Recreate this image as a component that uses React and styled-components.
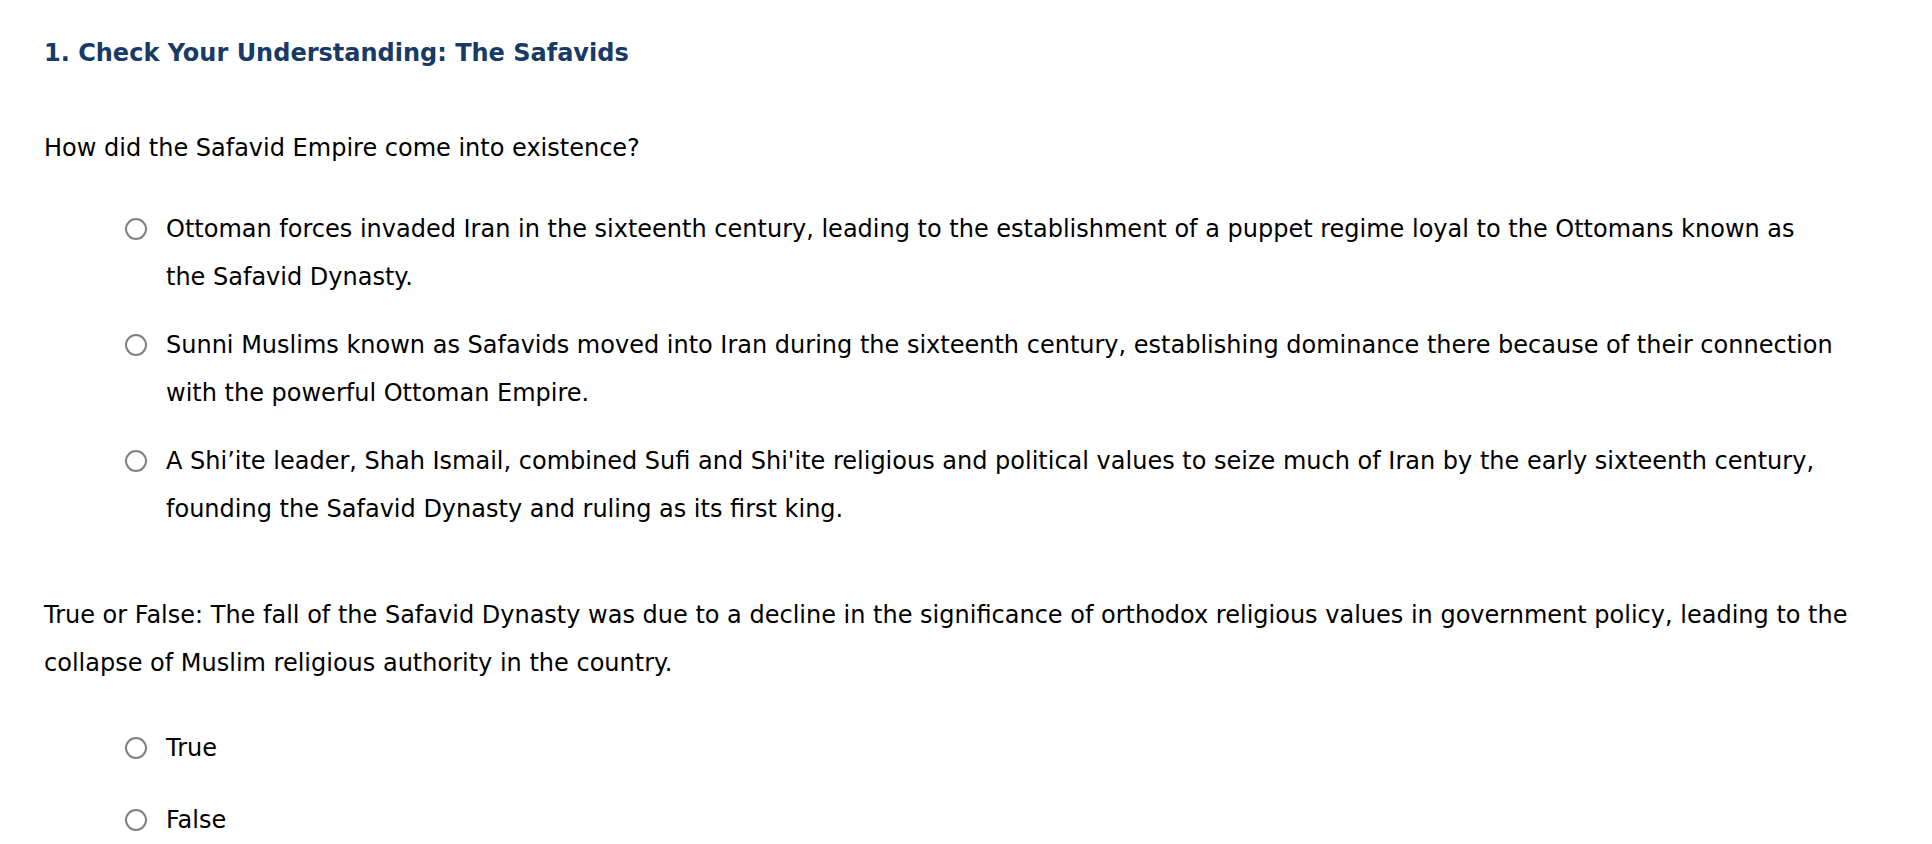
import styled, { createGlobalStyle } from 'styled-components';

const GlobalStyle = createGlobalStyle`
  body {
    margin: 0;
    background: #fff;
    font-family: Verdana, "DejaVu Sans", sans-serif;
    color: #000;
  }
`;

const Page = styled.div`
  padding: 36px 0 0 44px;
  width: 1826px;
`;

const Title = styled.h2`
  margin: 0;
  font-size: 24px;
  line-height: 34px;
  font-weight: bold;
  color: #173a66;
`;

const Question = styled.p`
  margin: ${(p) => p.top}px 0 0;
  font-size: 24px;
  line-height: 48px;
`;

const Options = styled.div`
  display: flex;
  flex-direction: column;
  gap: ${(p) => p.gap}px;
  margin-top: ${(p) => p.top}px;
  padding-left: 81px;
`;

const Option = styled.label`
  display: flex;
  align-items: flex-start;
  gap: 19px;
  font-size: 24px;
  line-height: 48px;
`;

const Radio = styled.span`
  flex: none;
  box-sizing: border-box;
  width: 22px;
  height: 22px;
  margin-top: 13px;
  border: 2px solid #808080;
  border-radius: 50%;
`;

const OptionText = styled.span`
  max-width: 1670px;
`;

const questions = [
  {
    text: 'How did the Safavid Empire come into existence?',
    top: 54,
    optTop: 33,
    gap: 20,
    options: [
      'Ottoman forces invaded Iran in the sixteenth century, leading to the establishment of a puppet regime loyal to the Ottomans known as the Safavid Dynasty.',
      'Sunni Muslims known as Safavids moved into Iran during the sixteenth century, establishing dominance there because of their connection with the powerful Ottoman Empire.',
      "A Shi’ite leader, Shah Ismail, combined Sufi and Shi'ite religious and political values to seize much of Iran by the early sixteenth century, founding the Safavid Dynasty and ruling as its first king.",
    ],
  },
  {
    text: 'True or False: The fall of the Safavid Dynasty was due to a decline in the significance of orthodox religious values in government policy, leading to the collapse of Muslim religious authority in the country.',
    top: 58,
    optTop: 37,
    gap: 24,
    options: ['True', 'False'],
  },
];

export default function App() {
  return (
    <>
      <GlobalStyle />
      <Page>
        <Title>1. Check Your Understanding: The Safavids</Title>
        {questions.map((q, i) => (
          <div key={i}>
            <Question top={q.top}>{q.text}</Question>
            <Options top={q.optTop} gap={q.gap}>
              {q.options.map((o, j) => (
                <Option key={j}>
                  <Radio />
                  <OptionText>{o}</OptionText>
                </Option>
              ))}
            </Options>
          </div>
        ))}
      </Page>
    </>
  );
}
